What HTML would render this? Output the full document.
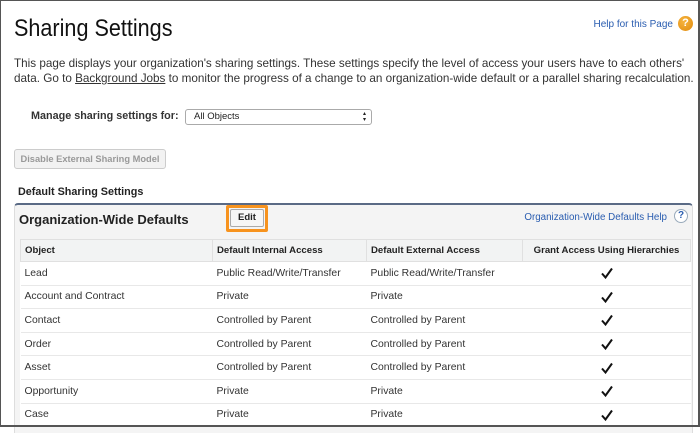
<!DOCTYPE html>
<html><head><meta charset="utf-8"><style>
*{margin:0;padding:0;box-sizing:border-box}
body{width:700px;height:427px;overflow:hidden;background:#fff;font-family:"Liberation Sans",Arial,sans-serif;color:#222;position:relative}
.frame{position:absolute;left:0;top:0;width:700px;height:427px;border:1px solid #555;border-right:2px solid #555;border-bottom:2px solid #555}
.abs{position:absolute;white-space:nowrap}
h1{position:absolute;left:14px;top:15px;font-size:24px;font-weight:normal;color:#111;transform:scaleX(0.9);transform-origin:left top}
.p{left:14px;font-size:11.7px;color:#333}
.help{right:27px;top:19px;font-size:10px;color:#2a5db0}
.qo{left:678px;top:16px;width:15px;height:15px;border-radius:50%;background:radial-gradient(circle at 40% 35%,#f7b540,#e08a0c);color:#fff;font-size:11px;font-weight:bold;text-align:center;line-height:15px}
.lbl{left:31px;top:110px;font-size:10.8px;font-weight:bold;color:#333}
.sel{left:185px;top:109px;width:187px;height:16px;border:1px solid #aaa;border-radius:3px;font-size:9.5px;padding-left:8px;line-height:14px;background:#fff}
.sel:after{content:"\25B4\A\25BE";white-space:pre;position:absolute;right:5px;top:1px;font-size:6px;line-height:6px}
.btn{left:14px;top:149px;width:152px;height:20px;border:1px solid #ccc;border-radius:3px;background:#f2f2f2;color:#999;font-size:9.3px;font-weight:bold;text-align:center;line-height:18px}
.dss{left:18px;top:186px;font-size:10.8px;font-weight:bold;color:#222}
.panel{left:14px;top:203px;width:679px;height:230px;background:#f4f4f4;border-top:2px solid #5a6a85;border-left:1px solid #ddd;border-right:1px solid #ddd;border-radius:4px 4px 0 0}
.owd{left:19px;top:212px;font-size:13px;font-weight:bold;color:#222}
.hl{left:226px;top:205px;width:42px;height:27px;border:3px solid #f7931e;border-radius:2px}
.edit{left:230px;top:209px;width:34px;height:18px;border:1px solid #aaa;background:#f6f6f6;font-size:9.5px;font-weight:bold;text-align:center;line-height:16px;border-radius:2px}
.hl2{right:33px;top:212px;font-size:9.8px;color:#2a5db0}
.qb{left:674px;top:209px;width:14px;height:14px;border-radius:50%;border:1px solid #9ab;color:#2a5db0;background:#fff;font-size:10px;font-weight:bold;text-align:center;line-height:12px}
table{position:absolute;left:20px;top:239px;width:671px;border-collapse:collapse;background:#fff;font-size:10.4px;color:#333}
th{background:#f2f3f3;height:22px;font-size:9.6px;font-weight:bold;text-align:left;padding-left:4px;border:1px solid #e0e0e0;color:#222}
td{height:23.6px;padding-left:4px;border-bottom:1px solid #e8e8e8}
th.c,td.c{text-align:center;padding-left:0}
td.c svg{display:inline-block;vertical-align:middle}
</style></head><body>
<h1>Sharing Settings</h1>
<div class="abs help">Help for this Page</div>
<div class="abs qo">?</div>
<div class="abs p" style="top:57px">This page displays your organization's sharing settings. These settings specify the level of access your users have to each others'</div>
<div class="abs p" style="top:72px">data. Go to <u>Background Jobs</u> to monitor the progress of a change to an organization-wide default or a parallel sharing recalculation.</div>
<div class="abs lbl">Manage sharing settings for:</div>
<div class="abs sel">All Objects</div>
<div class="abs btn">Disable External Sharing Model</div>
<div class="abs dss">Default Sharing Settings</div>
<div class="abs panel"></div>
<div class="abs owd">Organization-Wide Defaults</div>
<div class="abs edit">Edit</div>
<div class="abs hl"></div>
<div class="abs hl2">Organization-Wide Defaults Help</div>
<div class="abs qb">?</div>
<table>
<tr><th style="width:192px">Object</th><th style="width:154px">Default Internal Access</th><th style="width:156px">Default External Access</th><th class="c">Grant Access Using Hierarchies</th></tr>
<tr><td>Lead</td><td>Public Read/Write/Transfer</td><td>Public Read/Write/Transfer</td><td class="c"><svg width="12" height="12" viewBox="0 0 12 12"><path d="M1 6.5 L4.5 10.5 L11 1.5" fill="none" stroke="#111" stroke-width="2"/></svg></td></tr>
<tr><td>Account and Contract</td><td>Private</td><td>Private</td><td class="c"><svg width="12" height="12" viewBox="0 0 12 12"><path d="M1 6.5 L4.5 10.5 L11 1.5" fill="none" stroke="#111" stroke-width="2"/></svg></td></tr>
<tr><td>Contact</td><td>Controlled by Parent</td><td>Controlled by Parent</td><td class="c"><svg width="12" height="12" viewBox="0 0 12 12"><path d="M1 6.5 L4.5 10.5 L11 1.5" fill="none" stroke="#111" stroke-width="2"/></svg></td></tr>
<tr><td>Order</td><td>Controlled by Parent</td><td>Controlled by Parent</td><td class="c"><svg width="12" height="12" viewBox="0 0 12 12"><path d="M1 6.5 L4.5 10.5 L11 1.5" fill="none" stroke="#111" stroke-width="2"/></svg></td></tr>
<tr><td>Asset</td><td>Controlled by Parent</td><td>Controlled by Parent</td><td class="c"><svg width="12" height="12" viewBox="0 0 12 12"><path d="M1 6.5 L4.5 10.5 L11 1.5" fill="none" stroke="#111" stroke-width="2"/></svg></td></tr>
<tr><td>Opportunity</td><td>Private</td><td>Private</td><td class="c"><svg width="12" height="12" viewBox="0 0 12 12"><path d="M1 6.5 L4.5 10.5 L11 1.5" fill="none" stroke="#111" stroke-width="2"/></svg></td></tr>
<tr><td>Case</td><td>Private</td><td>Private</td><td class="c"><svg width="12" height="12" viewBox="0 0 12 12"><path d="M1 6.5 L4.5 10.5 L11 1.5" fill="none" stroke="#111" stroke-width="2"/></svg></td></tr>
</table>
<div class="frame"></div>
</body></html>
